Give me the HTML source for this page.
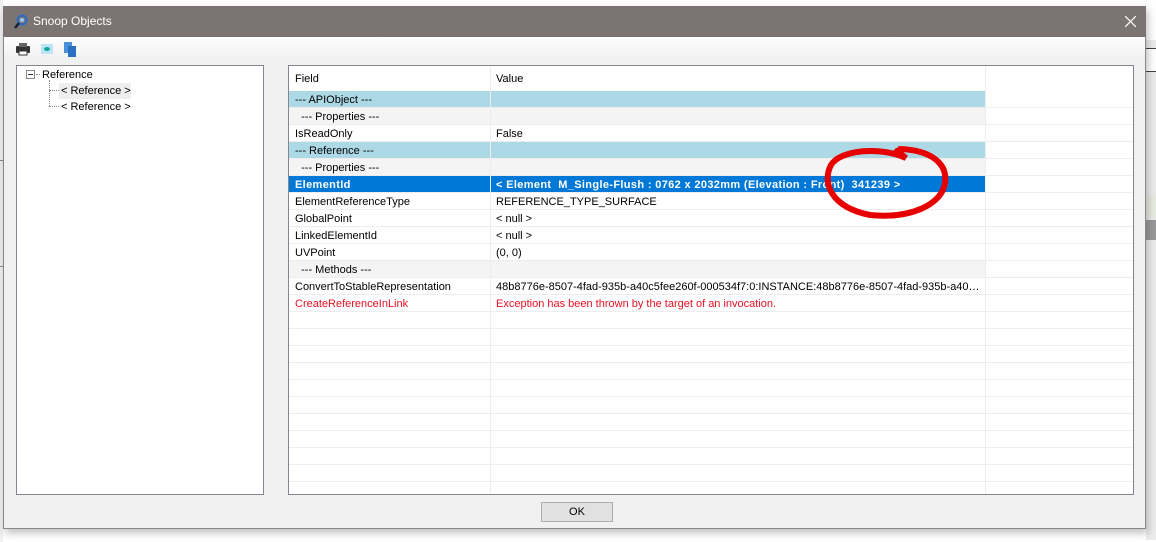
<!DOCTYPE html>
<html><head><style>
body{margin:0;width:1156px;height:542px;background:#fff;position:relative;overflow:hidden;font-family:"Liberation Sans",sans-serif;font-size:11px;}
.abs{position:absolute}
.row{position:absolute;left:0;height:17px;line-height:18px;border-bottom:1px solid #ededed;box-sizing:border-box;width:845px}
.row span{position:absolute;top:0;white-space:pre;overflow:hidden;text-overflow:ellipsis}
.f{left:6px;width:194px}.v{left:207px;width:486px}
.c1{position:absolute;left:0;width:201px;height:100%}
.c2{position:absolute;left:202px;width:494px;height:100%}
</style></head><body>
<div class="abs" style="left:0;top:0;width:3px;height:542px;background:#f0f0f0"></div>
<div class="abs" style="left:0;top:160px;width:3px;height:105px;border-top:1px solid #888;border-bottom:1px solid #888;background:#eee"></div>
<div class="abs" style="left:1146px;top:40px;width:10px;height:500px;background:#ececec"></div>
<div class="abs" style="left:1146px;top:48px;width:10px;height:22px;border-top:1px solid #444;border-bottom:1px solid #444;background:#fff"></div>
<div class="abs" style="left:1146px;top:195px;width:10px;height:22px;background:#e7ebe0"></div>
<div class="abs" style="left:1146px;top:220px;width:10px;height:20px;background:#9a9a9a"></div>
<div class="abs" style="left:3px;top:6px;width:1143px;height:523px;background:#f0f0f0;border:1px solid #888;box-sizing:border-box;box-shadow:2px 4px 8px rgba(0,0,0,.25)"></div>
<div class="abs" style="left:3px;top:6px;width:1143px;height:31px;background:#7b7473;color:#fff;font-size:12px;line-height:31px">
 <svg class="abs" style="left:10px;top:8px" width="16" height="16" viewBox="0 0 16 16"><circle cx="9" cy="6" r="4.5" fill="none" stroke="#2a6cc8" stroke-width="2"/><circle cx="9" cy="6" r="2" fill="#9cf"/><path d="M6 9 L2 14" stroke="#123" stroke-width="2.5"/></svg>
 <span class="abs" style="left:30px">Snoop Objects</span>
 <svg class="abs" style="left:1122px;top:10px" width="11" height="11"><path d="M0 0L11 11M11 0L0 11" stroke="#fff" stroke-width="1.2"/></svg>
</div>
<div class="abs" style="left:4px;top:37px;width:1141px;height:22px;background:linear-gradient(#fff,#f0f0f0)"></div>
<svg class="abs" style="left:16px;top:41px" width="64" height="16">
 <rect x="0" y="5" width="14" height="7" fill="#333" rx="1"/><rect x="3" y="2" width="8" height="4" fill="#666"/><rect x="3" y="10" width="8" height="4" fill="#fff" stroke="#333"/>
 <rect x="25" y="3" width="12" height="10" fill="#bde3f7"/><ellipse cx="31" cy="8" rx="3" ry="2" fill="#1a9"/>
 <rect x="48" y="1" width="8" height="11" fill="#4a90d9"/><rect x="52" y="5" width="8" height="11" fill="#2b6fc2"/>
</svg>
<div class="abs" style="left:16px;top:65px;width:248px;height:430px;background:#fff;border:1px solid #828790;box-sizing:border-box"></div>
<div class="abs" style="left:26px;top:70px;width:7px;height:7px;border:1px solid #888;background:#fff"></div>
<div class="abs" style="left:28px;top:74px;width:5px;height:1px;background:#333"></div>
<div class="abs" style="left:36px;top:74px;width:4px;border-top:1px dotted #888"></div>
<div class="abs" style="left:42px;top:69px">Reference</div>
<div class="abs" style="left:49px;top:80px;height:26px;border-left:1px dotted #888"></div>
<div class="abs" style="left:49px;top:90px;width:10px;border-top:1px dotted #888"></div>
<div class="abs" style="left:49px;top:106px;width:10px;border-top:1px dotted #888"></div>
<div class="abs" style="left:59px;top:83px;width:72px;height:16px;background:#eee"></div>
<div class="abs" style="left:61px;top:85px">&lt; Reference &gt;</div>
<div class="abs" style="left:61px;top:101px">&lt; Reference &gt;</div>
<div class="abs" style="left:288px;top:65px;width:846px;height:430px;background:#fff;border:1px solid #828790;box-sizing:border-box;overflow:hidden">
 <div class="abs" style="left:201px;top:0;width:1px;height:430px;background:#ededed"></div>
 <div class="abs" style="left:696px;top:0;width:1px;height:430px;background:#ededed"></div>
 <div class="abs" style="left:6px;top:7px">Field</div>
 <div class="abs" style="left:207px;top:7px">Value</div>
 <div id="rows" style="position:absolute;left:0;top:25px;width:845px"></div>
</div>
<script>
var R=[["--- APIObject ---","","h"],["  --- Properties ---","","g"],["IsReadOnly","False",""],["--- Reference ---","","h"],["  --- Properties ---","","g"],["ElementId","< Element  M_Single-Flush : 0762 x 2032mm (Elevation : Front)  341239 >","s"],["ElementReferenceType","REFERENCE_TYPE_SURFACE",""],["GlobalPoint","< null >",""],["LinkedElementId","< null >",""],["UVPoint","(0, 0)",""],["  --- Methods ---","","g"],["ConvertToStableRepresentation","48b8776e-8507-4fad-935b-a40c5fee260f-000534f7:0:INSTANCE:48b8776e-8507-4fad-935b-a40c5fee260f","" ],["CreateReferenceInLink","Exception has been thrown by the target of an invocation.","r"]];
var h="";for(var i=0;i<24;i++){var r=R[i]||["","",""];var bg=r[2]=="h"?"#add8e6":r[2]=="g"?"#f4f4f4":r[2]=="s"?"#0078d7":"";var col=r[2]=="s"?"#fff;font-weight:bold;letter-spacing:0.35px":r[2]=="r"?"#e81123":"#000";
h+='<div class="row" style="top:'+(i*17)+'px;color:'+col+'">'+(bg?'<div class="c1" style="background:'+bg+'"></div><div class="c2" style="background:'+bg+'"></div>':'')+'<span class="f">'+r[0].replace(/</g,"&lt;")+'</span><span class="v">'+r[1].replace(/</g,"&lt;")+'</span></div>';}
document.getElementById("rows").innerHTML=h;
</script>
<svg class="abs" style="left:0;top:0" width="1156" height="542"><path d="M897 151 L906 158 C880 146 840 150 831 165 C822 182 830 207 870 215 C912 219 942 204 945 183 C948 163 930 150 900 149" fill="none" stroke="#e60000" stroke-width="6" stroke-linecap="round"/></svg>
<div class="abs" style="left:541px;top:502px;width:72px;height:20px;background:#e1e1e1;border:1px solid #adadad;box-sizing:border-box;text-align:center;line-height:19px">OK</div>
</body></html>
